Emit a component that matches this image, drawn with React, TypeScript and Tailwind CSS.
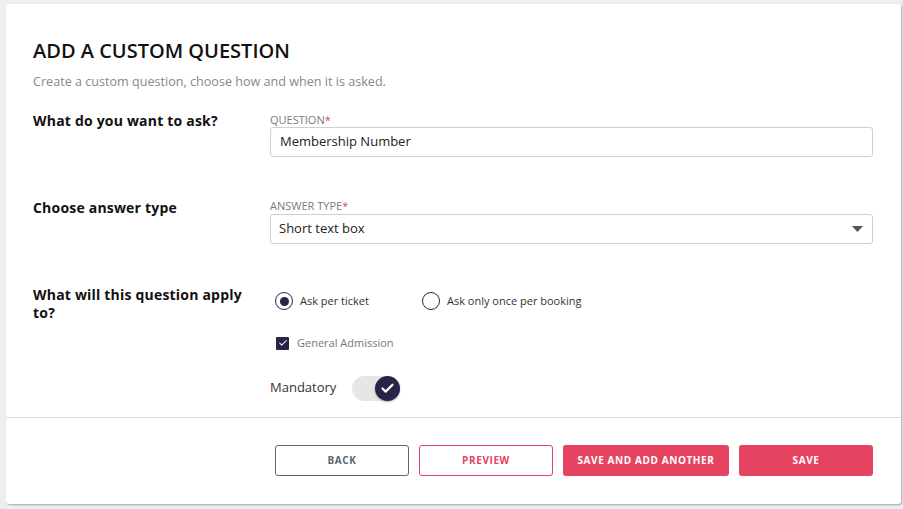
// Add custom question form card
import { Check } from "lucide-react";

const font = { fontFamily: '"Open Sans", "Liberation Sans", sans-serif' };

function FieldLabel({ text }: { text: string }) {
  return (
    <div className="text-[11px] leading-[15px] text-[#7a7a7a] uppercase">
      {text}<span className="text-[#e5435f]">*</span>
    </div>
  );
}

function Radio({ checked, label }: { checked?: boolean; label: string }) {
  return (
    <label className="flex items-center gap-[7px]">
      <span className="w-[18px] h-[18px] rounded-full border-[1.5px] border-[#2b2347] flex items-center justify-center">
        {checked && <span className="w-[9px] h-[9px] rounded-full bg-[#2b2347]" />}
      </span>
      <span className="text-[11px] text-[#333]">{label}</span>
    </label>
  );
}

export default function App() {
  return (
    <div className="w-[903px] h-[509px] bg-[#eeeeee] pt-[4px] pl-[6px]" style={font}>
      <div className="w-[895px] h-[500px] bg-white rounded-[3px] shadow-[1px_1px_2px_rgba(0,0,0,0.3)] flex flex-col">
        <div className="pl-[27px] pr-[28px] pt-[33px]">
          <h1 className="text-[20px] leading-[28px] font-semibold text-[#111] uppercase">Add a custom question</h1>
          <p className="mt-[7px] text-[12.6px] leading-[20px] text-[#888]">Create a custom question, choose how and when it is asked.</p>

          <div className="mt-[19px] grid grid-cols-[237px_1fr]">
            <div className="text-[14px] leading-[20px] font-bold tracking-[0.2px] text-[#111]">What do you want to ask?</div>
            <div className="pt-[1px]">
              <FieldLabel text="Question" />
              <div className="h-[30px] border border-[#cfcfcf] rounded-[3px] px-[9px] flex items-center text-[13px] text-[#222]">
                Membership Number
              </div>
            </div>
          </div>

          <div className="mt-[41px] grid grid-cols-[237px_1fr]">
            <div className="text-[14px] leading-[20px] font-bold tracking-[0.2px] text-[#111]">Choose answer type</div>
            <div>
              <FieldLabel text="Answer type" />
              <div className="mt-[1px] h-[30px] border border-[#cfcfcf] rounded-[3px] pl-[8px] pr-[9px] flex items-center justify-between text-[13px] text-[#222]">
                <span>Short text box</span>
                <svg width="11" height="6" viewBox="0 0 11 6"><path d="M0 0h11L5.5 6z" fill="#555" /></svg>
              </div>
            </div>
          </div>

          <div className="mt-[42px] grid grid-cols-[237px_1fr]">
            <div className="text-[14px] leading-[18px] font-bold tracking-[0.2px] text-[#111] pr-[20px]">What will this question apply to?</div>
            <div>
              <div className="h-[30px] flex items-center pl-[5px]">
                <div className="w-[147px]"><Radio checked label="Ask per ticket" /></div>
                <Radio label="Ask only once per booking" />
              </div>
              <div className="mt-[19px] flex items-center gap-[8px] pl-[6px]">
                <span className="w-[13px] h-[13px] rounded-[1px] bg-[#2b2347] flex items-center justify-center">
                  <Check className="w-[10px] h-[10px] text-white" strokeWidth={2.5} />
                </span>
                <span className="text-[11px] text-[#777]">General Admission</span>
              </div>
              <div className="mt-[24px] flex items-center gap-[16px]">
                <span className="text-[13px] text-[#333]">Mandatory</span>
                <div className="w-[48px] h-[25px] rounded-full bg-[#e6e6e6] flex items-center justify-end">
                  <span className="w-[25px] h-[25px] rounded-full bg-[#2b2347] flex items-center justify-center shadow-[0_1px_2px_rgba(0,0,0,0.3)]">
                    <Check className="w-[15px] h-[15px] text-white" strokeWidth={3.5} />
                  </span>
                </div>
              </div>
            </div>
          </div>
        </div>

        <div className="mt-[16px] border-t border-[#dcdcdc]" />

        <div className="pl-[27px] pr-[28px] pt-[27px] flex justify-end gap-[10px]">
          <button className="w-[134px] h-[31px] rounded-[3px] border border-[#5f676c] text-[10px] font-bold tracking-[0.6px] text-[#5b6670]">BACK</button>
          <button className="w-[134px] h-[31px] rounded-[3px] border border-[#e5435f] text-[10px] font-bold tracking-[0.6px] text-[#e5435f]">PREVIEW</button>
          <button className="w-[166px] h-[31px] rounded-[3px] bg-[#e5435f] text-[10px] font-bold tracking-[0.6px] text-white">SAVE AND ADD ANOTHER</button>
          <button className="w-[134px] h-[31px] rounded-[3px] bg-[#e5435f] text-[10px] font-bold tracking-[0.6px] text-white">SAVE</button>
        </div>
      </div>
    </div>
  );
}
